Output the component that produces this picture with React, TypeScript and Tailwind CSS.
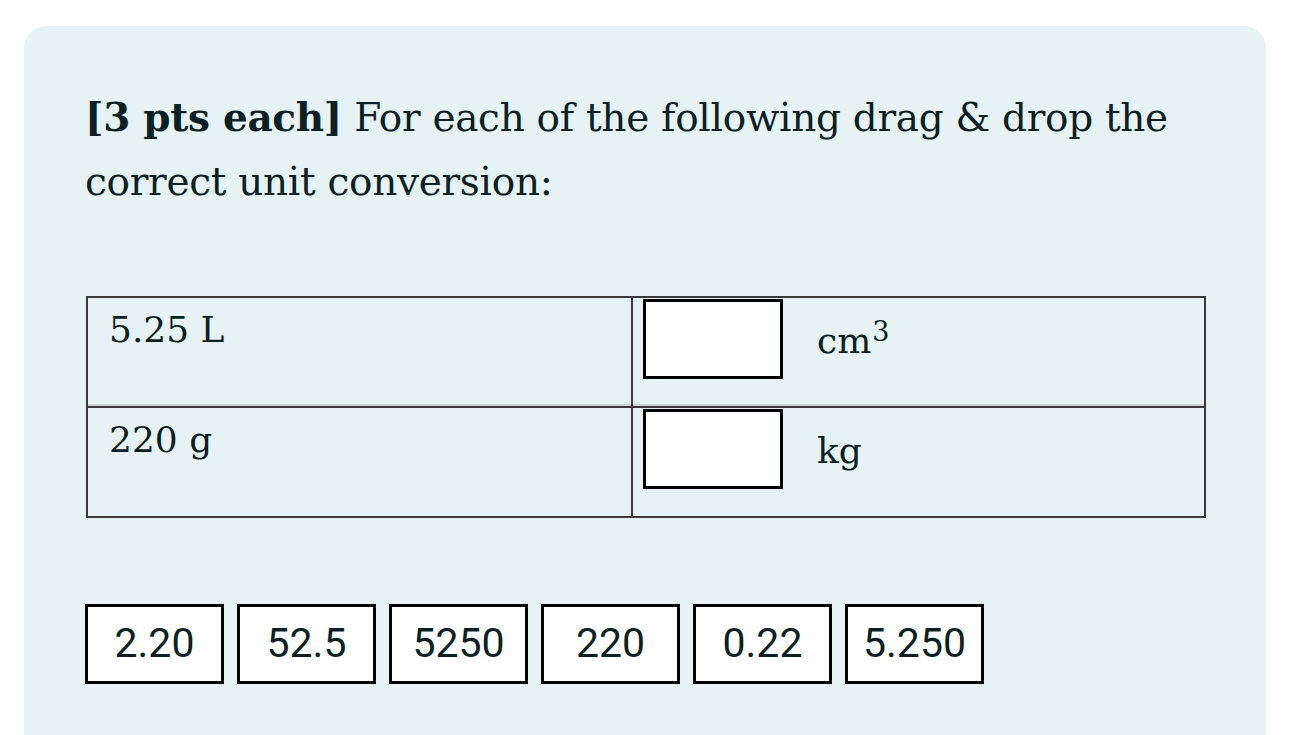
import React from 'react'

const rows = [
  { value: '5.25 L', unit: 'cm', sup: '3' },
  { value: '220 g', unit: 'kg', sup: '' },
]

const chips = ['2.20', '52.5', '5250', '220', '0.22', '5.250']

export default function App() {
  return (
    <div className="min-h-screen bg-white pt-[26px] px-[24px] text-[#0b1f24]">
      <div className="rounded-[22px] bg-[#e6f2f4] pl-[61px] pr-[60px] pt-[59px] pb-[80px]">
        {/* Question */}
        <p className="font-['DejaVu_Serif',serif] text-[39px] leading-[64px] tracking-[-0.3px]">
          <span className="font-bold">[3 pts each]</span>{' '}
          <span>For each of the following drag &amp; drop the correct unit conversion:</span>
        </p>

        {/* Conversion table */}
        <div className="mt-[82px] ml-[1px] w-[1120px] border-2 border-[#3a3a3a] font-['DejaVu_Serif',serif] text-[36px]">
          {rows.map((row, i) => (
            <div
              key={row.value}
              className={`flex ${i > 0 ? 'border-t-2 border-[#3a3a3a] shadow-[0_-2px_0_#cfd5d7]' : ''}`}
            >
              <div className="w-[543px] h-[108px] pl-[21px] pt-[8px] leading-[48px]">{row.value}</div>
              <div className="flex-1 flex border-l-2 border-[#3a3a3a] pl-[10px] pt-[1px]">
                <div className="w-[140px] h-[80px] border-[3px] border-black bg-white" />
                <span className="ml-[34px] mt-[18px] leading-[48px]">
                  {row.unit}
                  {row.sup && <sup className="text-[27px] relative -top-[12px] ml-[1px]">{row.sup}</sup>}
                </span>
              </div>
            </div>
          ))}
        </div>

        {/* Answer chips */}
        <div className="mt-[86px] flex gap-[13px] font-['Roboto',sans-serif] text-[41px]">
          {chips.map((c) => (
            <div
              key={c}
              className="w-[139px] h-[80px] border-[3px] border-black bg-white flex items-center justify-center"
            >
              {c}
            </div>
          ))}
        </div>
      </div>
    </div>
  )
}
